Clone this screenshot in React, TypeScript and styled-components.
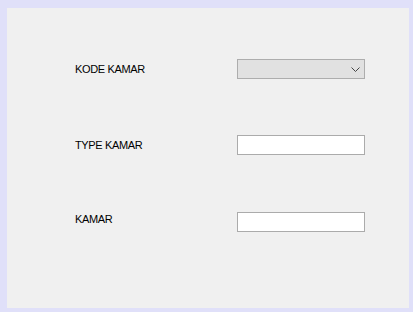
import styled, { createGlobalStyle } from "styled-components";

const Global = createGlobalStyle`
  body {
    margin: 0;
    background: #ffffff;
    font-family: "Liberation Sans", Arial, sans-serif;
  }
`;

const Frame = styled.div`
  width: 413px;
  height: 312px;
  box-sizing: border-box;
  padding: 8px 4px 4px 7px;
  background: #e0e0f9;
`;

const Form = styled.div`
  height: 100%;
  background: #f0f0f0;
  box-sizing: border-box;
  padding: 51px 0 0 68px;
  display: flex;
  flex-direction: column;
  gap: 56px;
`;

const Row = styled.div<{ $shift?: number }>`
  display: flex;
  align-items: center;
  height: 20px;
  margin-top: ${(p) => p.$shift ?? 0}px;
`;

const Label = styled.div<{ $raise?: number }>`
  width: 162px;
  font-size: 11px;
  letter-spacing: -0.35px;
  color: #000;
  position: relative;
  top: ${(p) => -(p.$raise ?? 0)}px;
`;

const TextBox = styled.div`
  width: 128px;
  height: 20px;
  box-sizing: border-box;
  background: #ffffff;
  border: 1px solid #ababab;
`;

const Combo = styled.div`
  width: 128px;
  height: 20px;
  box-sizing: border-box;
  background: #e1e1e1;
  border: 1px solid #adadad;
  display: flex;
  align-items: center;
  justify-content: flex-end;
  padding-right: 4px;
`;

export default function App() {
  return (
    <>
      <Global />
      <Frame>
        <Form>
          <Row>
            <Label>KODE KAMAR</Label>
            <Combo>
              <svg width="9" height="5" viewBox="0 0 9 5">
                <polyline points="0.5,0.5 4.5,4.5 8.5,0.5" fill="none" stroke="#444" strokeWidth="1" />
              </svg>
            </Combo>
          </Row>
          <Row>
            <Label>TYPE KAMAR</Label>
            <TextBox />
          </Row>
          <Row $shift={1}>
            <Label $raise={3}>KAMAR</Label>
            <TextBox />
          </Row>
        </Form>
      </Frame>
    </>
  );
}
